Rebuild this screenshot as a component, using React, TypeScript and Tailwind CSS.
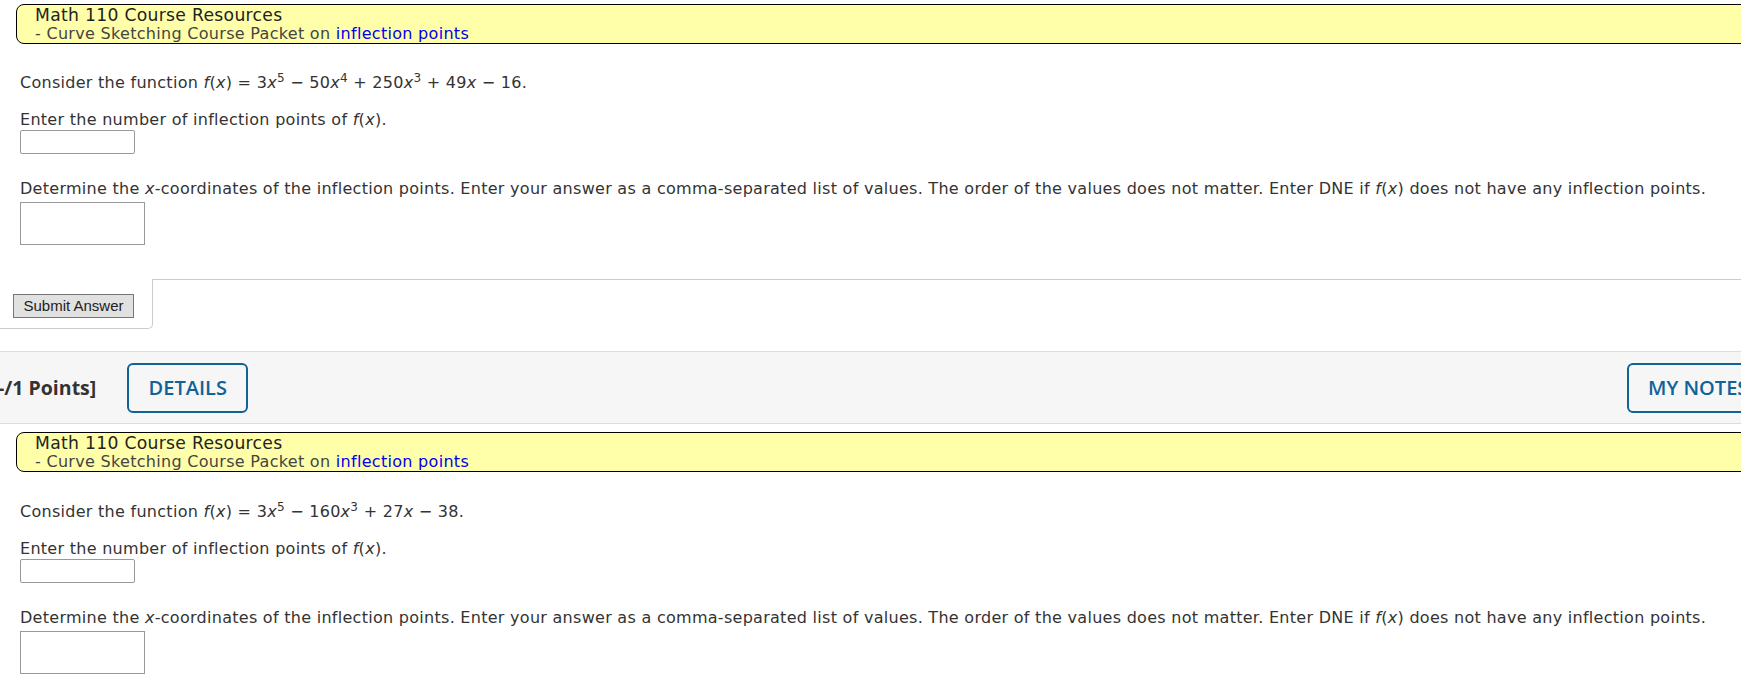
import React from "react";

const verdana = { fontFamily: '"DejaVu Sans", Verdana, sans-serif' };

function Fx() {
  return (
    <>
      <i>f</i>(<i>x</i>)
    </>
  );
}

function ResourceBox() {
  return (
    <div className="ml-[16px] w-[1800px] h-[40px] rounded-l-[8px] border border-black bg-[#ffffaa] pl-[18px] pt-[1px] leading-[18.5px] tracking-[0.3px]">
      <div className="text-[17.2px] text-[#222]">Math 110 Course Resources</div>
      <div className="text-[16px] text-[#444]">
        - Curve Sketching Course Packet on <span className="text-[#0000ee]">inflection points</span>
      </div>
    </div>
  );
}

function Question({ fn, top }: { fn: React.ReactNode; top: string }) {
  return (
    <div className="pl-[20px] text-[16px] leading-[20px] tracking-[0.28px] text-[#333]">
      <p className={top}>
        Consider the function <Fx /> = {fn}.
      </p>
      <p className="mt-[17px]">
        Enter the number of inflection points of <Fx />.
      </p>
      <div className="w-[115px] h-[24px] border border-[#999] rounded-[2px] bg-white" />
      <p className="mt-[25px]">
        Determine the <i>x</i>-coordinates of the inflection points. Enter your answer as a comma-separated list of
        values. The order of the values does not matter. Enter DNE if <Fx /> does not have any inflection points.
      </p>
      <div className="mt-[3px] w-[125px] h-[43px] border border-[#999] bg-white" />
    </div>
  );
}

export default function App() {
  return (
    <div className="w-[1741px] h-[689px] overflow-hidden bg-white" style={verdana}>
      <div className="pt-[4px]">
        <ResourceBox />
      </div>
      <Question
        top="mt-[29px]"
        fn={
          <>
            3<i>x</i>
            <sup>5</sup> − 50<i>x</i>
            <sup>4</sup> + 250<i>x</i>
            <sup>3</sup> + 49<i>x</i> − 16
          </>
        }
      />

      {/* submit tab */}
      <div className="mt-[34px] flex">
        <div className="w-[153px] h-[50px] border-r border-b border-[#ccc] rounded-br-[5px] pt-[15px] pl-[13px]">
          <button
            className="w-[121px] h-[24px] bg-[#e1e1e1] border border-[#777] text-[15px] text-[#222] leading-[22px]"
            style={{ fontFamily: '"Liberation Sans", Arial, sans-serif' }}
          >
            Submit Answer
          </button>
        </div>
        <div className="flex-1 border-t border-[#ccc]" />
      </div>

      {/* question header */}
      <div
        className="mt-[22px] h-[73px] bg-[#f6f6f6] border-y border-[#ddd] flex items-center"
        style={{ fontFamily: '"Open Sans", sans-serif' }}
      >
        <span className="ml-[-2px] text-[19.5px] font-bold text-[#333]">-/1 Points]</span>
        <button className="ml-[31px] w-[121px] h-[50px] rounded-[6px] border-2 border-[#0f6399] text-[20px] font-semibold text-[#0f6399]">
          DETAILS
        </button>
        <button className="ml-auto mr-[-80px] w-[194px] h-[50px] rounded-[6px] border-2 border-[#0f6399] text-[20px] font-semibold text-[#0f6399] text-left pl-[19px]">
          MY NOTES
        </button>
      </div>

      <div className="pt-[8px]">
        <ResourceBox />
      </div>
      <Question
        top="mt-[30px]"
        fn={
          <>
            3<i>x</i>
            <sup>5</sup> − 160<i>x</i>
            <sup>3</sup> + 27<i>x</i> − 38
          </>
        }
      />
    </div>
  );
}
